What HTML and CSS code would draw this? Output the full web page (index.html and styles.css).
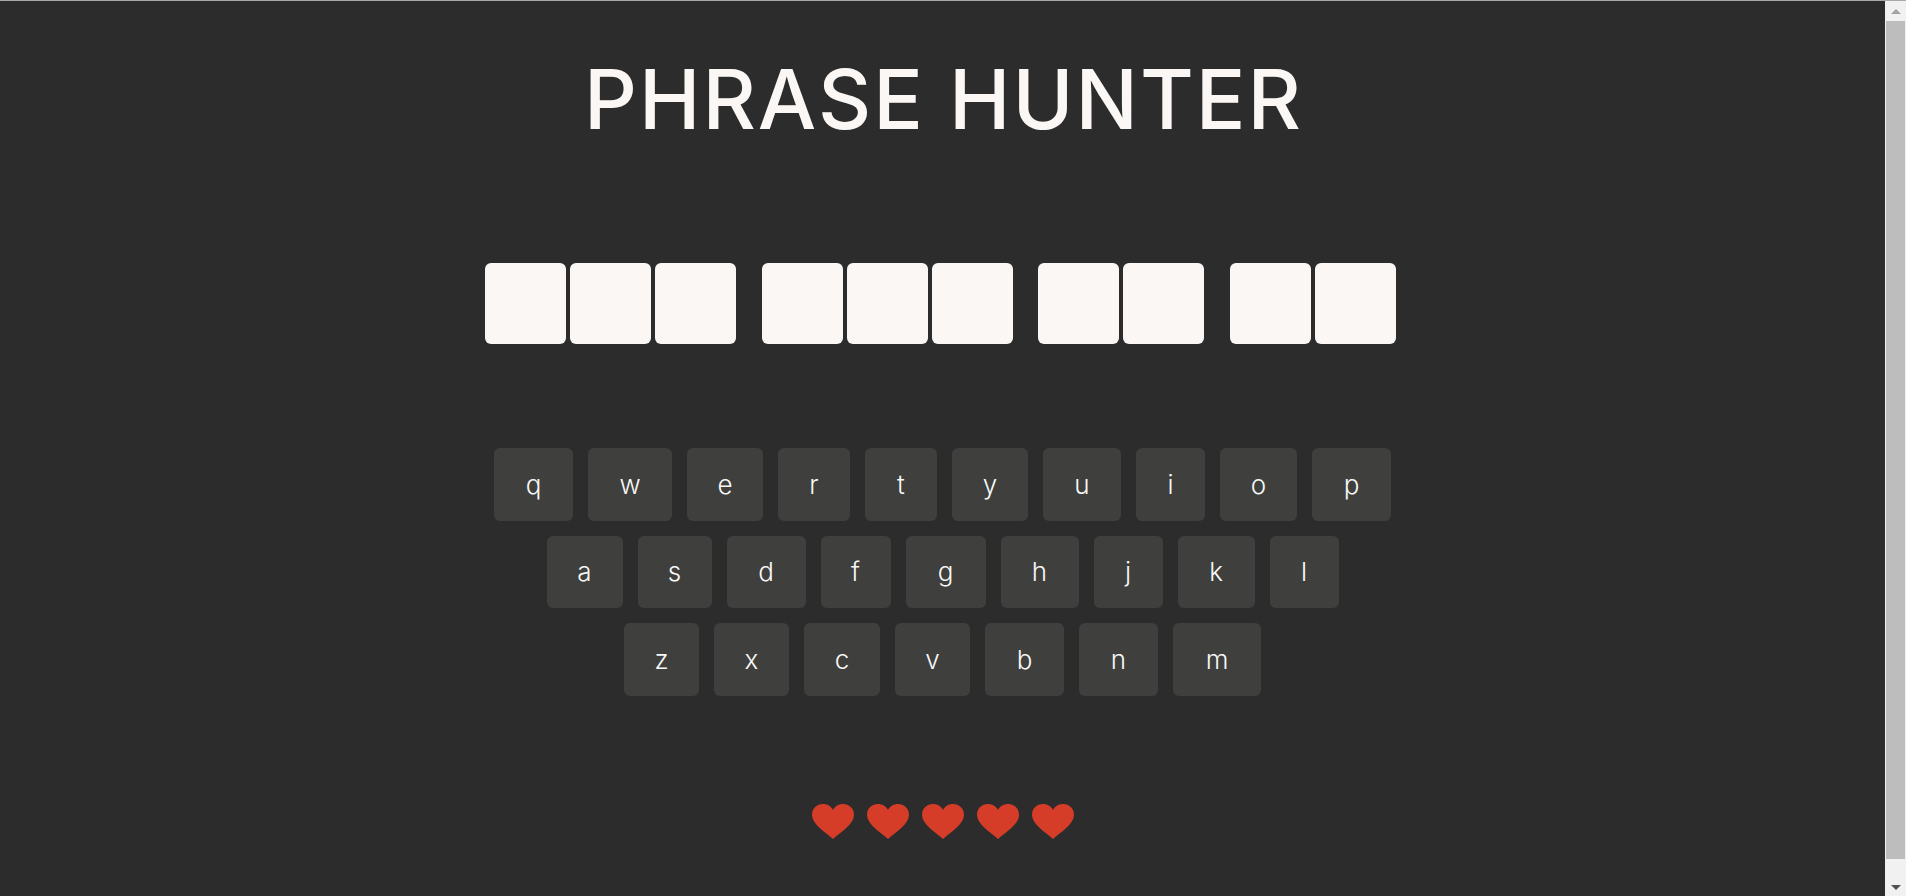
FILE: index.html
```html
<!DOCTYPE html>
<html lang="en">
<head>
    <meta charset="UTF-8">
    <meta name="viewport" content="width=device-width, initial-scale=1.0">
    <title>Phrase Hunter</title>
    <link rel="stylesheet" href="styles.css">
</head>
<body>
    <div class="main">
        <div class="header">
            <h1 class="title">PHRASE HUNTER</h1>
        </div>

        <div class="phrase">
            <div class="word"><div class="tile"></div><div class="tile"></div><div class="tile"></div></div>
            <div class="word"><div class="tile"></div><div class="tile"></div><div class="tile"></div></div>
            <div class="word"><div class="tile"></div><div class="tile"></div></div>
            <div class="word"><div class="tile"></div><div class="tile"></div></div>
        </div>

        <div class="qwerty">
            <div class="keyrow">
                <button class="key key-q">q</button>
                <button class="key key-w">w</button>
                <button class="key key-e">e</button>
                <button class="key key-r">r</button>
                <button class="key key-t">t</button>
                <button class="key key-y">y</button>
                <button class="key key-u">u</button>
                <button class="key key-i">i</button>
                <button class="key key-o">o</button>
                <button class="key key-p">p</button>
            </div>
            <div class="keyrow">
                <button class="key key-a">a</button>
                <button class="key key-s">s</button>
                <button class="key key-d">d</button>
                <button class="key key-f">f</button>
                <button class="key key-g">g</button>
                <button class="key key-h">h</button>
                <button class="key key-j">j</button>
                <button class="key key-k">k</button>
                <button class="key key-l">l</button>
            </div>
            <div class="keyrow">
                <button class="key key-z">z</button>
                <button class="key key-x">x</button>
                <button class="key key-c">c</button>
                <button class="key key-v">v</button>
                <button class="key key-b">b</button>
                <button class="key key-n">n</button>
                <button class="key key-m">m</button>
            </div>
        </div>

        <div class="scoreboard">
            <svg class="heart" viewBox="0 0 42 35"><path d="M21 35C13 28 0 20 0 11C0 4 5 0 11 0C15 0 19 2 21 6C23 2 27 0 31 0C37 0 42 4 42 11C42 20 29 28 21 35Z"/></svg>
            <svg class="heart" viewBox="0 0 42 35"><path d="M21 35C13 28 0 20 0 11C0 4 5 0 11 0C15 0 19 2 21 6C23 2 27 0 31 0C37 0 42 4 42 11C42 20 29 28 21 35Z"/></svg>
            <svg class="heart" viewBox="0 0 42 35"><path d="M21 35C13 28 0 20 0 11C0 4 5 0 11 0C15 0 19 2 21 6C23 2 27 0 31 0C37 0 42 4 42 11C42 20 29 28 21 35Z"/></svg>
            <svg class="heart" viewBox="0 0 42 35"><path d="M21 35C13 28 0 20 0 11C0 4 5 0 11 0C15 0 19 2 21 6C23 2 27 0 31 0C37 0 42 4 42 11C42 20 29 28 21 35Z"/></svg>
            <svg class="heart" viewBox="0 0 42 35"><path d="M21 35C13 28 0 20 0 11C0 4 5 0 11 0C15 0 19 2 21 6C23 2 27 0 31 0C37 0 42 4 42 11C42 20 29 28 21 35Z"/></svg>
        </div>
    </div>

    <div class="scrollbar">
        <div class="scroll-btn"><span class="arrow-up"></span></div>
        <div class="scroll-thumb"></div>
        <div class="scroll-btn scroll-btn-end"><span class="arrow-down"></span></div>
    </div>
</body>
</html>
```

FILE: styles.css
```css
* {
    box-sizing: border-box;
}

html, body {
    height: 100%;
    margin: 0;
    overflow: hidden;
}

body {
    display: flex;
    border-top: 1px solid #a8a8a8;
    background-color: #2c2c2d;
    font-family: Inter, "Open Sans", Arial, sans-serif;
    color: #fff;
}

.main {
    flex: 1;
    min-width: 0;
}

.header {
    padding-top: 48px;
    padding-left: 2px;
    text-align: center;
}

.title {
    margin: 0;
    font-size: 82.500px;
    font-weight: 470;
    line-height: 100px;
    letter-spacing: 2px;
    color: #faf7f4;
}

.phrase {
    display: flex;
    justify-content: center;
    margin-top: 114px;
}

.word {
    display: flex;
    margin-right: 21.500px;
}

.word:last-child {
    margin-right: 0;
}

.tile {
    width: 81px;
    height: 81px;
    margin-right: 4px;
    border-radius: 6px;
    background-color: #faf7f4;
}

.qwerty {
    display: flex;
    flex-direction: column;
    gap: 15px;
    margin-top: 104px;
}

.keyrow {
    display: flex;
    justify-content: center;
    gap: 15px;
}

.key {
    height: 72.500px;
    padding: 0;
    border: none;
    border-radius: 6px;
    background-color: #3f3f3e;
    font-family: inherit;
    font-size: 26px;
    font-weight: 350;
    color: #f8f8f6;
}

/* key widths follow the letter */
.key-q { width: 79px; }
.key-w { width: 84px; }
.key-e { width: 76px; }
.key-r { width: 72px; }
.key-t { width: 72px; }
.key-y { width: 76px; }
.key-u { width: 78px; }
.key-i { width: 69px; }
.key-o { width: 77px; }
.key-p { width: 79px; }
.key-a { width: 76px; }
.key-s { width: 74px; }
.key-d { width: 79px; }
.key-f { width: 70px; }
.key-g { width: 80px; }
.key-h { width: 78px; }
.key-j { width: 69px; }
.key-k { width: 77px; }
.key-l { width: 69px; }
.key-z { width: 75px; }
.key-x { width: 75px; }
.key-c { width: 76px; }
.key-v { width: 75px; }
.key-b { width: 79px; }
.key-n { width: 79px; }
.key-m { width: 88px; }

.scoreboard {
    display: flex;
    justify-content: center;
    gap: 13px;
    margin-top: 108px;
}

.heart {
    display: block;
    width: 42px;
    height: 35px;
    fill: #d63d28;
}

/* scrollbar */
.scrollbar {
    display: flex;
    flex-direction: column;
    width: 21px;
    padding: 0 1px;
    background-color: #f1f1f1;
}

.scroll-btn {
    display: flex;
    justify-content: center;
    padding-top: 8px;
    height: 20px;
}

.scroll-btn-end {
    height: 37px;
    padding-top: 26px;
}

.scroll-thumb {
    flex: 1;
    background-color: #bdbdbd;
}

.arrow-up {
    width: 0;
    height: 0;
    border-left: 5px solid transparent;
    border-right: 5px solid transparent;
    border-bottom: 5px solid #a3a3a3;
}

.arrow-down {
    width: 0;
    height: 0;
    border-left: 5px solid transparent;
    border-right: 5px solid transparent;
    border-top: 5px solid #505050;
}
```
